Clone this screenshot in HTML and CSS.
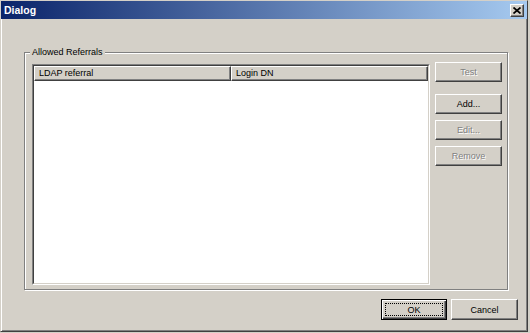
FILE: index.html
```html
<!DOCTYPE html>
<html lang="en">
<head>
  <meta charset="UTF-8">
  <title>Dialog</title>
  <link rel="stylesheet" href="styles.css">
</head>
<body>
  <div class="window">
    <div class="titlebar">
      <span class="title">Dialog</span>
      <span class="close">
        <svg width="8" height="7" viewBox="0 0 8 7">
          <path d="M0.5 0.5 L7.5 6.5 M7.5 0.5 L0.5 6.5" stroke="#000" stroke-width="1.7" fill="none"/>
        </svg>
      </span>
    </div>

    <div class="client">
      <fieldset class="group">
        <legend>Allowed Referrals</legend>
        <div class="group-body">
          <!-- referral table -->
          <div class="list">
            <div class="list-inner">
              <div class="list-head">
                <div class="col col-ref">LDAP referral</div>
                <div class="col col-dn">Login DN</div>
              </div>
              <div class="list-rows"></div>
            </div>
          </div>

          <div class="side-buttons">
            <button class="btn disabled">Test</button>
            <button class="btn add">Add...</button>
            <button class="btn disabled">Edit...</button>
            <button class="btn disabled">Remove</button>
          </div>
        </div>
      </fieldset>

      <div class="footer">
        <button class="btn btn-default">OK</button>
        <button class="btn btn-cancel">Cancel</button>
      </div>
    </div>
  </div>
</body>
</html>
```

FILE: styles.css
```css
* {
  box-sizing: border-box;
}
body {
  margin: 0;
  background: #d4d0c8;
  font-family: "Liberation Sans", Arial, sans-serif;
  font-size: 9px;
  color: #000;
}
.window {
  width: 528px;
  height: 332px;
  background: #d4d0c8;
  border-top: 1px solid #d4d0c8;
  border-left: 1px solid #d4d0c8;
  border-right: 1px solid #404040;
  border-bottom: 1px solid #404040;
  box-shadow: inset 1px 1px 0 #fff, inset -1px -1px 0 #808080;
}
.titlebar {
  height: 18px;
  background: linear-gradient(to right, #0a246a, #a6caf0);
  display: flex;
  align-items: center;
  justify-content: space-between;
  padding: 0 3px 0 3px;
}
.title {
  color: #fff;
  font-weight: bold;
  font-size: 10.5px;
}
.close {
  width: 14px;
  height: 13px;
  background: #d4d0c8;
  border: 1px solid;
  border-color: #fff #404040 #404040 #fff;
  box-shadow: inset -1px -1px 0 #808080;
  display: flex;
  align-items: center;
  justify-content: center;
}
.client {
  padding: 28px 9px 0 23px;
}
.group {
  width: 484px;
  height: 243px;
  margin: 0;
  padding: 0 5px 0 7px;
  border: 1px solid #808080;
  box-shadow: inset 1px 1px 0 #fff, 1px 1px 0 #fff;
}
.group legend {
  margin-left: -2px;
  padding: 0 2px;
  line-height: 11px;
  background: #d4d0c8;
}
.group-body {
  display: flex;
  gap: 5px;
  padding-top: 4px;
}
.list {
  width: 398px;
  height: 221px;
  margin-top: 2px;
  border: 1px solid;
  border-color: #808080 #fff #fff #808080;
}
.list-inner {
  height: 100%;
  background: #fff;
  border: 1px solid;
  border-color: #404040 #d4d0c8 #d4d0c8 #404040;
}
.list-head {
  display: flex;
}
.col {
  height: 15px;
  line-height: 13px;
  padding-left: 4px;
  background: #d4d0c8;
  border: 1px solid;
  border-color: #fff #404040 #404040 #fff;
  box-shadow: inset -1px -1px 0 #808080;
  white-space: nowrap;
}
.col-ref {
  width: 197px;
}
.col-dn {
  flex: 1;
}
.side-buttons {
  display: flex;
  flex-direction: column;
  gap: 6px;
}
.btn {
  width: 67px;
  height: 20px;
  padding: 0;
  font-family: "Liberation Sans", Arial, sans-serif;
  font-size: 9px;
  color: #000;
  background: #d4d0c8;
  border: 1px solid;
  border-color: #fff #404040 #404040 #fff;
  border-radius: 0;
  box-shadow: inset -1px -1px 0 #808080;
}
.side-buttons .add {
  margin-top: 6px;
}
.btn.disabled {
  color: #808080;
  text-shadow: 1px 1px 0 #fff;
}
.footer {
  display: flex;
  justify-content: flex-end;
  gap: 4px;
  margin-top: 9px;
}
.footer .btn {
  height: 21px;
}
.btn-default {
  position: relative;
  width: 66px;
  border: 1px solid #000;
  box-shadow: inset 1px 1px 0 #fff, inset -1px -1px 0 #404040, inset -2px -2px 0 #808080;
}
.btn-default::after {
  content: "";
  position: absolute;
  top: 3px;
  left: 3px;
  right: 3px;
  bottom: 3px;
  border: 1px dotted #000;
}
```
